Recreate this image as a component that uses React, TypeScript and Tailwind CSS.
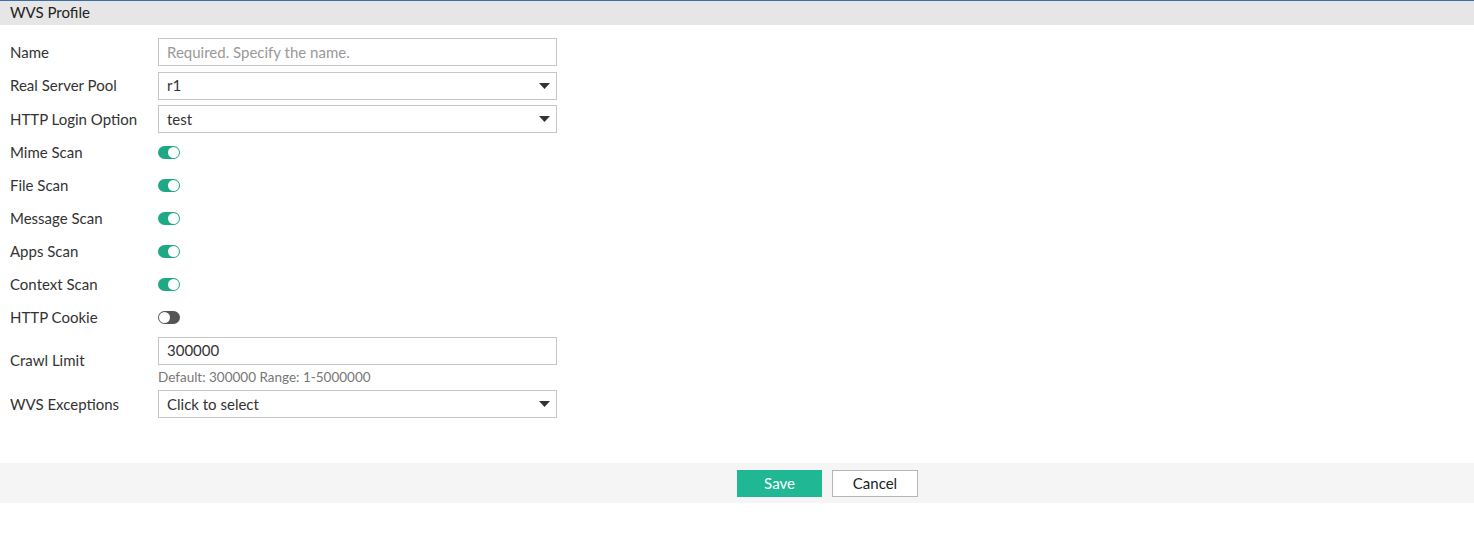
import React, { useState } from "react";

const font = { fontFamily: "Lato, 'Open Sans', sans-serif" };

function Caret() {
  return (
    <svg width="11" height="6" viewBox="0 0 11 6" className="shrink-0">
      <path d="M0 0 L11 0 L5.5 6 Z" fill="#333" />
    </svg>
  );
}

function Toggle({ on }: { on: boolean }) {
  return (
    <div
      className={`relative w-[22px] h-[13px] rounded-full ${
        on ? "bg-[#1fa886]" : "bg-[#555]"
      }`}
    >
      <div
        className={`absolute top-[1px] w-[11px] h-[11px] rounded-full bg-white ${
          on ? "left-[10px]" : "left-[1px]"
        }`}
      />
    </div>
  );
}

function Label({ children }: { children: React.ReactNode }) {
  return <div className="w-[148px] shrink-0 text-[15px] text-[#333]">{children}</div>;
}

function Select({ value }: { value: string }) {
  return (
    <div className="w-[399px] h-[28px] border border-[#c6c6c6] flex items-center justify-between pl-2 pr-[6px] text-[15px] text-[#333] bg-white">
      <span>{value}</span>
      <Caret />
    </div>
  );
}

export default function App() {
  const [toggles] = useState([
    { label: "Mime Scan", on: true },
    { label: "File Scan", on: true },
    { label: "Message Scan", on: true },
    { label: "Apps Scan", on: true },
    { label: "Context Scan", on: true },
    { label: "HTTP Cookie", on: false },
  ]);

  return (
    <div className="w-[1474px] h-[540px] bg-white" style={font}>
      <div className="h-[25px] bg-[#e6e6e6] border-t border-[#3b6ea5] flex items-center px-[10px] pb-[2px] text-[15px] text-[#222]">
        WVS Profile
      </div>

      <div className="pl-[10px] pt-[10px]">
        <div className="flex items-center h-[34px]">
          <Label>Name</Label>
          <div className="w-[399px] h-[28px] border border-[#c6c6c6] flex items-center px-2 text-[15px] text-[#999]">
            Required. Specify the name.
          </div>
        </div>
        <div className="flex items-center h-[33px]">
          <Label>Real Server Pool</Label>
          <Select value="r1" />
        </div>
        <div className="flex items-center h-[34px]">
          <Label>HTTP Login Option</Label>
          <Select value="test" />
        </div>
        {toggles.map((t) => (
          <div key={t.label} className="flex items-center h-[33px]">
            <Label>{t.label}</Label>
            <Toggle on={t.on} />
          </div>
        ))}

        <div className="flex items-center h-[52px]">
          <Label>Crawl Limit</Label>
          <div className="flex flex-col">
            <div className="w-[399px] h-[28px] border border-[#c6c6c6] flex items-center px-2 text-[15px] text-[#333]">
              300000
            </div>
            <div className="text-[13.5px] text-[#777] mt-[5px] leading-[14px]">
              Default: 300000 Range: 1-5000000
            </div>
          </div>
        </div>
        <div className="flex items-center h-[34px] mt-[1px]">
          <Label>WVS Exceptions</Label>
          <Select value="Click to select" />
        </div>
      </div>

      <div className="mt-[42px] h-[40px] bg-[#f5f5f5] flex items-center justify-start pl-[737px] gap-[10px]">
        <button className="w-[85px] h-[27px] bg-[#20b795] text-white text-[15px]">
          Save
        </button>
        <button className="w-[86px] h-[27px] bg-white border border-[#b5b5b5] text-[#222] text-[15px]">
          Cancel
        </button>
      </div>
    </div>
  );
}
